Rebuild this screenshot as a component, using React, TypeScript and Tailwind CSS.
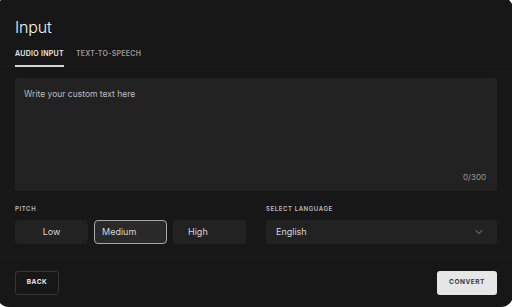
import React from "react";
import { ChevronDown } from "lucide-react";

export default function App() {
  const font = { fontFamily: "Inter, 'Noto Sans', sans-serif" };
  return (
    <div className="w-[512px] h-[307px] overflow-hidden bg-white" style={font}>
      <div className="-ml-[3px] -mt-[3px] w-[516px] h-[310px] rounded-[12px] bg-[#171717] flex flex-col">
        <div className="pl-[18px] pr-[16px] pt-[20px]">
          <div className="text-[16px] leading-[20px] font-light text-[#f2f2f2] tracking-[-0.01em]">Input</div>
        </div>
        <div className="mt-[12px] pl-[18px] pr-[16px] flex gap-[12px] border-b border-[#1e1e1e]">
          <div className="-mb-px pb-[6px] border-b-2 border-[#d4d4d4] text-[7px] leading-[10px] font-semibold tracking-[0.04em] text-[#f0f0f0]">
            AUDIO INPUT
          </div>
          <div className="pb-[6px] text-[7px] leading-[10px] font-semibold tracking-[0.04em] text-[#9a9a9a]">
            TEXT-TO-SPEECH
          </div>
        </div>
        <div className="pl-[18px] pr-[16px]">
          <div className="mt-[11px] h-[113px] rounded-[3px] bg-[#222222] flex flex-col justify-between px-[9px] pt-[10px] pb-[9px]">
            <div className="text-[8.5px] leading-[12px] text-[#bdbdbd]">Write your custom text here</div>
            <div className="self-end text-[8px] leading-[10px] text-[#9a9a9a] pr-[2px]">0/300</div>
          </div>
          <div className="grid grid-cols-2 gap-[20px] mt-[14px]">
            <div>
              <div className="text-[6px] leading-[8px] font-semibold tracking-[0.1em] text-[#bcbcbc]">PITCH</div>
              <div className="mt-[7px] flex gap-[6px]">
                <div className="w-[73px] h-[24px] rounded-[4px] bg-[#222222] flex items-center justify-center text-[9px] text-[#d6d6d6]">Low</div>
                <div className="w-[73px] h-[24px] rounded-[4px] bg-[#292929] border border-[#a8a8a8] flex items-center pl-[7px] text-[9px] text-[#d6d6d6]">Medium</div>
                <div className="w-[73px] h-[24px] rounded-[4px] bg-[#222222] flex items-center pl-[15px] text-[9px] text-[#d6d6d6]">High</div>
              </div>
            </div>
            <div>
              <div className="text-[6px] leading-[8px] font-semibold tracking-[0.1em] text-[#bcbcbc]">SELECT LANGUAGE</div>
              <div className="mt-[7px] h-[24px] rounded-[3px] bg-[#222222] flex items-center justify-between pl-[10px] pr-[12px]">
                <span className="text-[9px] text-[#d6d6d6]">English</span>
                <ChevronDown size={12} strokeWidth={1.5} color="#b0b0b0" />
              </div>
            </div>
          </div>
        </div>
        <div className="mt-[13px] border-t border-[#1e1e1e] pl-[18px] pr-[16px] pt-[13px] flex justify-between">
          <div className="w-[44px] h-[24px] rounded-[3px] border border-[#363636] flex items-center justify-center text-[6.5px] font-bold tracking-[0.08em] text-[#ececec]">BACK</div>
          <div className="w-[60px] h-[24px] rounded-[3px] bg-[#e6e6e6] flex items-center justify-center text-[6.5px] font-bold tracking-[0.08em] text-[#3a3a3a]">CONVERT</div>
        </div>
      </div>
    </div>
  );
}
